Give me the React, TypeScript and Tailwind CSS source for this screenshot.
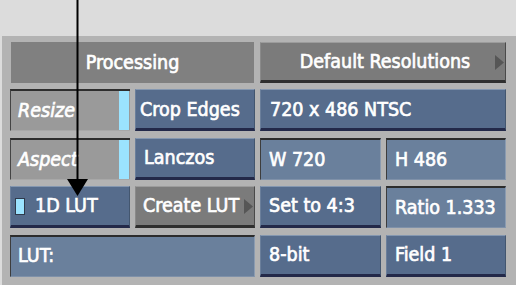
import React from "react";

const font = { fontFamily: '"DejaVu Sans Condensed", "DejaVu Sans", "Liberation Sans", sans-serif' };

const base =
  "box-border flex items-center text-white font-normal text-[19.5px] leading-none whitespace-nowrap overflow-hidden [-webkit-text-stroke:0.65px_white]";
const raisedBlue =
  base +
  " bg-[#566c8c] border-t border-t-[#8497b0] border-l border-l-[#6b7f9b] border-r border-r-[#43566f] border-b-[3px] border-b-[#232949]";
const sunkenBlue =
  base +
  " bg-[#6a809c] border-t-2 border-t-[#2c2c2c] border-l border-l-[#3d3d3d] border-r border-r-[#8a9bb1] border-b border-b-[#7f91a9]";
const sunkenGray =
  base +
  " bg-[#9a9a9a] border-t-2 border-t-[#2e2e2e] border-l border-l-[#444] border-b border-b-[#a8a8a8]";
const raisedGray =
  base +
  " bg-[#7b7b7b] border-t border-t-[#9c9c9c] border-l border-l-[#8a8a8a] border-r border-r-[#4a4a4a] border-b-[3px] border-b-[#2f2f2f]";

function Tri() {
  return (
    <svg width="9" height="15" viewBox="0 0 9 15" className="shrink-0">
      <polygon points="0,0 9,7.5 0,15" fill="#565656" />
    </svg>
  );
}

export default function App() {
  return (
    <div className="relative w-[516px] h-[285px] bg-[#dcdcdc] overflow-hidden" style={font}>
      <div className="pt-[36px] pl-[2px]">
        <div className="h-[249px] bg-[#b3b3b3] pt-[6px] pl-[8px]">
          <div className="grid grid-cols-[120px_120px_121px_120px] grid-rows-[41px_42px_42px_42px_42px] gap-x-[5px] gap-y-[6.4px]">
            <div className={base + " col-span-2 ml-[1px] mr-[1px] bg-[#808080] justify-center"}>
              Processing
            </div>
            <div className={raisedGray + " col-span-2 justify-center relative"}>
              <span className="pl-[4px]">Default Resolutions</span>
              <div className="absolute right-[1px] top-[12px]">
                <Tri />
              </div>
            </div>

            <div className={sunkenGray + " relative pl-[7px] italic"}>
              Resize
              <div className="absolute right-[1px] top-0 bottom-0 w-[10px] bg-[#9be3ff]" />
            </div>
            <div className={raisedBlue + " pl-[4px]"}>Crop Edges</div>
            <div className={raisedBlue + " col-span-2 pl-[9px]"}>720 x 486 NTSC</div>

            <div className={sunkenGray + " relative pl-[7px] italic"}>
              Aspect
              <div className="absolute right-[1px] top-0 bottom-0 w-[10px] bg-[#9be3ff]" />
            </div>
            <div className={raisedBlue + " pl-[8px]"}>Lanczos</div>
            <div className={sunkenBlue + " pl-[8px]"}>W 720</div>
            <div className={sunkenBlue + " pl-[8px]"}>H 486</div>

            <div className={raisedBlue + " pl-[4px]"}>
              <div className="w-[10px] h-[17px] bg-[#9be3ff] border border-[#2f3a4c] mr-[10px]" />
              1D LUT
            </div>
            <div className={raisedGray + " pl-[7px] pr-[1px] justify-between"}>
              <span>Create LUT</span>
              <Tri />
            </div>
            <div className={raisedBlue + " pl-[8px]"}>Set to 4:3</div>
            <div className={sunkenBlue + " pl-[8px]"}>Ratio 1.333</div>

            <div className={sunkenBlue + " col-span-2 pl-[7px]"}>LUT:</div>
            <div className={raisedBlue + " pl-[8px]"}>8-bit</div>
            <div className={raisedBlue + " pl-[8px]"}>Field 1</div>
          </div>
        </div>
      </div>
      <svg className="absolute left-0 top-0" width="516" height="285" viewBox="0 0 516 285">
        <rect x="76.5" y="0" width="2" height="182" fill="#000" />
        <polygon points="67,179 88,179 77.5,196" fill="#000" />
      </svg>
    </div>
  );
}
